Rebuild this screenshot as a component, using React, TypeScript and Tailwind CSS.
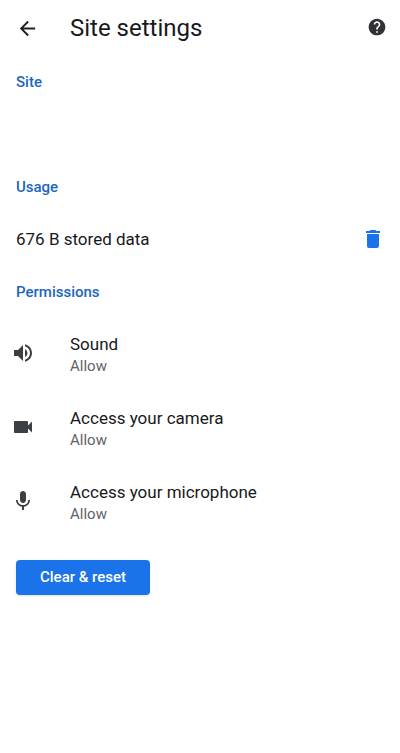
import React from "react";
import { MdArrowBack, MdDelete, MdHelp, MdMic, MdVideocam, MdVolumeUp } from "react-icons/md";

const permissions = [
  { name: "Sound", value: "Allow", Icon: MdVolumeUp },
  { name: "Access your camera", value: "Allow", Icon: MdVideocam },
  { name: "Access your microphone", value: "Allow", Icon: MdMic },
];

function SectionTitle({ children }: { children: React.ReactNode }) {
  return (
    <h2 className="flex h-[52px] items-center px-4 text-[15px] font-medium text-[#1b66c0]">
      {children}
    </h2>
  );
}

export default function App() {
  return (
    <div className="min-h-screen bg-white font-[Roboto,sans-serif] text-[#18191b]">
      <header className="flex h-14 items-center pr-[13px] pl-4">
        <button type="button" aria-label="Back" className="text-[#202124]">
          <MdArrowBack size={23} />
        </button>
        <h1 className="ml-[31px] flex-1 text-[24px] leading-8">Site settings</h1>
        <button type="button" aria-label="Help" className="mb-0.5 text-[#303236]">
          <MdHelp size={20} />
        </button>
      </header>

      <main>
        <section className="h-[105px]">
          <SectionTitle>Site</SectionTitle>
        </section>

        <section>
          <SectionTitle>Usage</SectionTitle>
          <div className="flex h-[53px] items-center justify-between pr-[15px] pl-4">
            <span className="text-[17px]">676 B stored data</span>
            <button type="button" aria-label="Delete stored data" className="mb-0.5 text-[#1a73e8]">
              <MdDelete size={24} />
            </button>
          </div>
        </section>

        <section>
          <SectionTitle>Permissions</SectionTitle>
          <ul>
            {permissions.map(({ name, value, Icon }) => (
              <li key={name} className="flex h-[74px] items-start pt-[15px] pl-[11px]">
                <Icon size={24} className="mt-2 text-[#3c4043]" />
                <div className="ml-[35px] leading-[22px]">
                  <p className="text-[17px]">{name}</p>
                  <p className="text-[15px] text-[#5f6368]">{value}</p>
                </div>
              </li>
            ))}
          </ul>
        </section>

        <button
          type="button"
          className="mt-5 ml-4 h-[35px] rounded bg-[#1a73e8] px-6 text-[15px] font-medium text-white shadow-sm"
        >
          Clear &amp; reset
        </button>
      </main>
    </div>
  );
}
